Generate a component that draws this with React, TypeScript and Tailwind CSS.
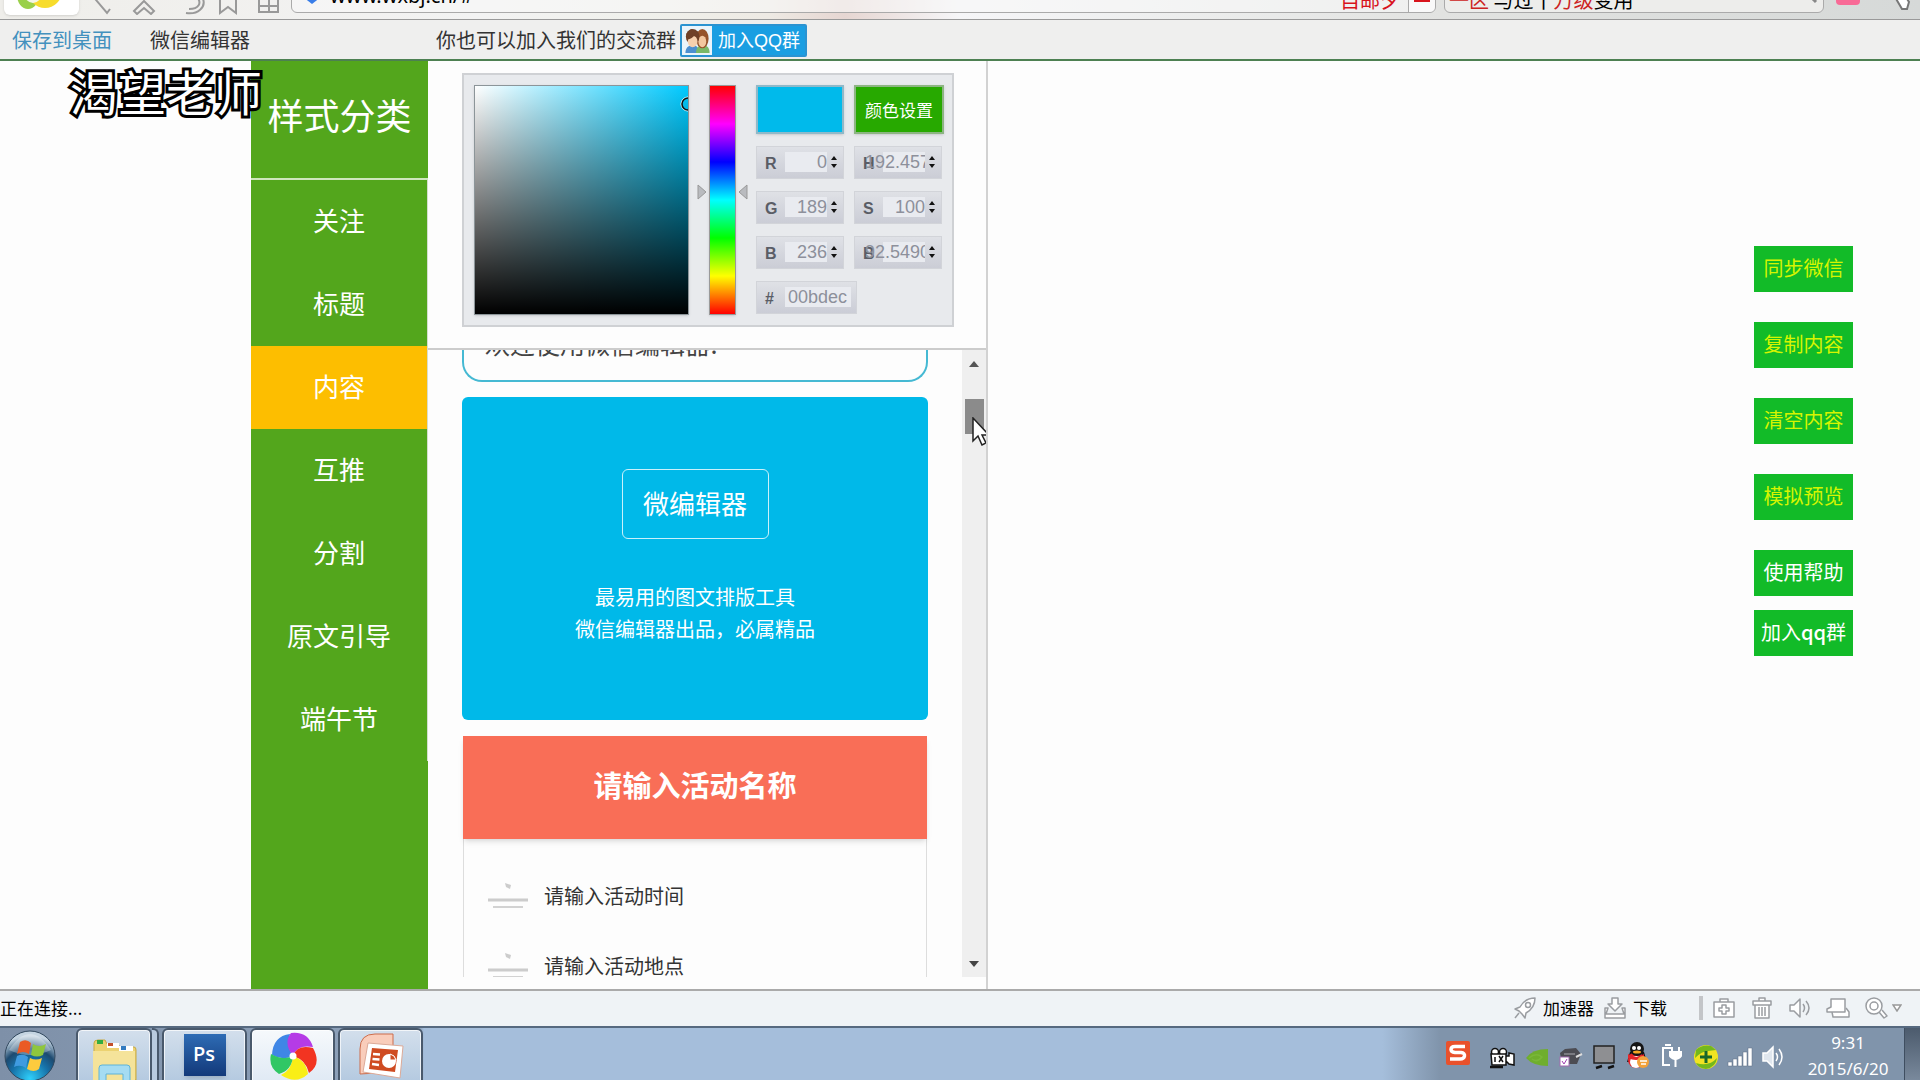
import { useState } from "react";
import type { ReactNode } from "react";
import clsx from "clsx";

const CATEGORIES = ["关注", "标题", "内容", "互推", "分割", "原文引导", "端午节"];

const ACTIONS = ["同步微信", "复制内容", "清空内容", "模拟预览"];

function BrowserChrome() {
  return (
    <header className="relative flex h-5 shrink-0 items-end overflow-hidden border-b border-[#999] bg-[linear-gradient(90deg,#efeeea_0%,#f3f3f3_25%,#f0f1ec_33%,#eeeae4_40%,#e6d6d2_44%,#f6f6f8_50%,#eeefef_60%,#e2e3e1_75%,#d6d9d8_100%)]">
      <div className="ml-1 mb-1 h-10 w-[75px] shrink-0 rounded-md bg-white shadow">
        <svg viewBox="0 0 75 40" className="h-10 w-[75px]">
          <ellipse cx="24" cy="20" rx="11" ry="14" fill="#9ad04a" />
          <ellipse cx="41" cy="16" rx="17" ry="17" fill="#f7dc2c" />
          <ellipse cx="29" cy="18" rx="9" ry="10" fill="#f4f6e6" />
        </svg>
      </div>
      <svg viewBox="0 0 200 40" className="mb-1 ml-3 h-10 w-[200px] shrink-0" fill="none" stroke="#999" strokeWidth="2">
        <path d="M8 20 L5 25 L16 38 L19 34" />
        <path d="M43 36 L53 26 L63 36 L60 39 L53 33 L46 39 Z" />
        <path d="M98 34 C108 34 111 28 106 22 M95 38 C107 40 115 32 112 24" />
        <path d="M129 20 V38 L137 32 L145 38 V20" />
        <path d="M168 20 V37 H187 V20 M178 20 V37 M168 31 H187" />
      </svg>
      <div className="mb-1.5 flex h-10 min-w-0 flex-1 items-end overflow-hidden rounded-b-md border border-[#aaa] bg-[#f8f8f8]/60">
        <svg viewBox="0 0 20 20" className="mb-2 ml-2.5 size-5 shrink-0">
          <path d="M1 6 L10 0 L19 6 L19 13 L10 20 L1 13 Z" fill="#397de8" />
        </svg>
        <input
          aria-label="地址"
          defaultValue="www.wxbj.cn/#"
          className="mb-0.5 ml-2 h-7 min-w-0 flex-1 bg-transparent font-['Noto_Sans'] text-xl leading-7 text-black outline-none"
        />
        <span className="flex h-9 items-end gap-1 pr-2 text-xl leading-6 text-[#d8141c]">
          <span>自邮夕</span>
        </span>
        <span className="h-full w-[27px] border-l border-[#aaa] bg-white/60">
          <span className="mx-auto mt-3.5 block h-3.5 w-4 bg-[#d8141c]" />
        </span>
      </div>
      <div className="mb-1.5 ml-2 flex h-10 w-[380px] shrink-0 items-end overflow-hidden rounded-b-md border border-[#aaa] bg-[#ededeb] px-1">
        <span className="flex-1 text-xl leading-6 text-black">
          <span className="text-[#c22]">一区</span>
          <span> 与过十</span>
          <span className="text-[#c22]">万级</span>
          <span>变用</span>
        </span>
        <svg viewBox="0 0 20 20" className="mb-2 size-5" fill="none" stroke="#888" strokeWidth="3">
          <circle cx="6" cy="7" r="5" />
          <path d="M10 11 L17 18" />
        </svg>
      </div>
      <span className="mb-3.5 ml-3 h-6 w-6 shrink-0 rounded bg-[#f86a96]" />
      <svg viewBox="0 0 28 28" className="mb-2 mr-1 ml-7 size-7 shrink-0">
        <path d="M7 14 L14 26 L19 26 L21 19 L14 8 Z" fill="#fff" stroke="#777" strokeWidth="2" />
      </svg>
    </header>
  );
}

function TopBar() {
  return (
    <div className="flex h-[41px] shrink-0 items-center border-b-2 border-[#4d8052] bg-[#efefee] text-xl text-[#333]">
      <a href="#save" className="ml-3 text-[#4391be]">
        保存到桌面
      </a>
      <a href="#home" className="ml-[38px]">
        微信编辑器
      </a>
      <span className="ml-[186px]">你也可以加入我们的交流群</span>
      <a
        href="#qq"
        className="ml-1 mt-0.5 flex h-[33px] w-[127px] items-center gap-1.5 overflow-hidden rounded-xs border-2 border-[#2b93d1] bg-[#1a9ee2] font-['Liberation_Sans','Noto_Sans_CJK_SC',sans-serif] text-lg whitespace-nowrap text-white"
      >
        <svg viewBox="0 0 30 30" className="h-full w-[30px] shrink-0 bg-[#eaf4fb]">
          <path d="M3 28 C3 21 8 20 11 20 C15 20 17 23 17 28 Z" fill="#4d8fd0" />
          <path d="M14 28 C14 21 18 20 21 20 C26 20 28 23 28 28 Z" fill="#7ab868" />
          <ellipse cx="20.5" cy="13" rx="6.5" ry="10" fill="#96532b" />
          <ellipse cx="20.5" cy="16" rx="4" ry="6" fill="#f3c7a0" />
          <ellipse cx="10.5" cy="11" rx="7" ry="8" fill="#704028" />
          <ellipse cx="10.5" cy="16" rx="5" ry="6" fill="#f7d0ae" />
          <path d="M5 14 Q10 13 13 9 L17 14 L16 6 L9 3 L4 8 Z" fill="#704028" />
        </svg>
        加入QQ群
      </a>
    </div>
  );
}

function Sidebar({ active, onSelect }: { active: string; onSelect: (name: string) => void }) {
  return (
    <nav className="flex w-[177px] shrink-0 flex-col bg-[#53a61c] text-white">
      <h1 className="flex h-[119px] shrink-0 items-center justify-center border-b-2 border-[#cfe6bd] pb-3 text-4xl">
        样式分类
      </h1>
      {CATEGORIES.map((name) => (
        <button
          key={name}
          onClick={() => onSelect(name)}
          className={clsx(
            "h-[83px] shrink-0 border-r border-[#d5ddcf] pb-1 text-[26px]",
            name === active && "bg-[#fdbe00]",
          )}
        >
          {name}
        </button>
      ))}
    </nav>
  );
}

function Spinner() {
  return (
    <svg viewBox="0 0 6 12" className="h-3 w-1.5 shrink-0" fill="#111">
      <path d="M0 4 L3 0 L6 4 Z" />
      <path d="M0 8 L3 12 L6 8 Z" />
    </svg>
  );
}

function Field({ label, value, wide }: { label: string; value: string; wide?: boolean }) {
  return (
    <label
      className={clsx(
        "flex h-[33px] items-start border border-[#d2d4d9] bg-linear-to-b from-[#dfe1e6] to-[#cbcdd6] pt-px font-['Liberation_Sans',sans-serif]",
        wide ? "w-[101px]" : "w-[88px]",
      )}
    >
      <span className="ml-2 w-0 pt-1 text-base leading-6 font-bold text-[#5a5d66]">{label}</span>
      <input
        defaultValue={value}
        className={clsx(
          "mt-1 h-5 bg-[linear-gradient(90deg,transparent_20px,#e9ebf0_20px)] text-lg leading-5 text-[#8d909b] outline-none",
          wide ? "w-[86px] pr-1 text-right" : "mr-1 w-[62px]",
          !wide && value.length < 5 ? "text-right" : "pl-0.5",
        )}
      />
      {!wide && (
        <span className="pt-2">
          <Spinner />
        </span>
      )}
    </label>
  );
}

function ColorPicker() {
  return (
    <div className="mr-[33px] ml-[34px] mt-3 flex h-[254px] w-[492px] shrink-0 border-2 border-[#cfd1d4] bg-[#e8eaed] pt-2.5 pl-2.5">
      <div className="relative h-[230px] w-[215px] overflow-hidden border border-[#8c9599] bg-[linear-gradient(to_top,#000,transparent),linear-gradient(to_right,#fff,#00caff)] shadow-sm">
        <svg viewBox="0 0 16 16" className="absolute -right-2 top-2.5 size-4" fill="none">
          <circle cx="8" cy="8" r="7" stroke="#fff" />
          <circle cx="8" cy="8" r="6" stroke="#111" strokeWidth="1.5" />
        </svg>
      </div>
      <svg viewBox="0 0 10 16" className="mt-[99px] ml-2 h-4 w-2.5" fill="#b9bbbf" stroke="#999">
        <path d="M1 1 L9 8 L1 15 Z" />
      </svg>
      <div className="ml-0.5 h-[230px] w-[27px] border border-[#999] bg-[linear-gradient(to_bottom,#f00,#f0f,#00f,#0ff,#0f0,#ff0,#f00)] shadow-sm" />
      <svg viewBox="0 0 10 16" className="mt-[99px] ml-0.5 h-4 w-2.5" fill="#b9bbbf" stroke="#999">
        <path d="M9 1 L1 8 L9 15 Z" />
      </svg>
      <div className="ml-2 grid h-fit grid-cols-[88px_90px] gap-x-[10px] gap-y-3">
        <div className="h-[49px] border-2 border-[#8fb9c9] bg-[#00baeb] shadow-sm" />
        <button className="h-[49px] border-2 border-[#8db583] bg-[#27a900] text-[17px] text-white shadow-sm">
          颜色设置
        </button>
        <Field label="R" value="0" />
        <Field label="H" value="192.45762" />
        <Field label="G" value="189" />
        <Field label="S" value="100" />
        <Field label="B" value="236" />
        <Field label="B" value="92.549019" />
        <Field label="#" value="00bdec" wide />
      </div>
    </div>
  );
}

function EventRow({ text }: { text: string }) {
  return (
    <li className="flex h-[70px] items-center pb-0.5 text-xl text-[#333]">
      <svg viewBox="0 0 40 30" className="mr-4 ml-6 h-[30px] w-10">
        <path d="M17 2 L23 4 L22 8 L18 6 Z" fill="#ccc" />
        <path d="M0 19 H40" stroke="#ccc" strokeWidth="3" />
        <path d="M5 26 H35" stroke="#d2d2d2" strokeWidth="2" />
      </svg>
      {text}
    </li>
  );
}

function Scrollbar() {
  return (
    <div className="relative flex w-6 shrink-0 flex-col items-center bg-[#efefef]">
      <svg viewBox="0 0 10 6" className="mt-[11px] h-1.5 w-2.5" fill="#555">
        <path d="M0 6 L5 0 L10 6 Z" />
      </svg>
      <div className="mt-8 h-[35px] w-[19px] bg-[#8b8b8b]" />
      <svg viewBox="0 0 10 6" className="mt-auto mb-2.5 h-1.5 w-2.5" fill="#444">
        <path d="M0 0 L5 6 L10 0 Z" />
      </svg>
      <svg viewBox="0 0 18 29" className="absolute top-[67px] left-2.5 h-[29px] w-[18px]" fill="#fff" stroke="#222" strokeWidth="1.5">
        <path d="M1 1 V24 L6 19 L10 28 L14 26 L10 18 H17 Z" />
      </svg>
    </div>
  );
}

function StylePanel() {
  return (
    <section className="flex w-[560px] shrink-0 flex-col border-r-2 border-[#d2d2d2] pb-3">
      <ColorPicker />
      <div className="mt-[21px] flex min-h-0 flex-1 overflow-hidden border-t-2 border-[#ccc]">
        <div className="-mt-[30px] flex-1 pr-[34px] pl-[34px]">
          <div className="h-[62px] rounded-b-[20px] border-2 border-t-0 border-[#45b9d3] pl-[21px] text-[25px] leading-[46px] text-[#444]">
            欢迎使用微信编辑器!
          </div>
          <article className="mt-[15px] flex h-[323px] flex-col items-center rounded-md bg-[#00b9e9] text-white">
            <h2 className="mt-[72px] flex h-[70px] w-[147px] items-center justify-center rounded-md border border-[#c9f1fb] pb-1 text-[26px]">
              微编辑器
            </h2>
            <p className="mt-[42px] text-center text-xl leading-8">
              最易用的图文排版工具
              <br />
              微信编辑器出品，必属精品
            </p>
          </article>
          <article className="mx-px mt-4 h-[360px] border-x border-[#ddd]">
            <h2 className="-mx-px mb-[23px] flex h-[103px] items-center justify-center bg-[#f96e57] pb-1.5 text-[29px] font-bold text-white shadow-md">
              请输入活动名称
            </h2>
            <ul>
              <EventRow text="请输入活动时间" />
              <EventRow text="请输入活动地点" />
            </ul>
          </article>
        </div>
        <Scrollbar />
      </div>
    </section>
  );
}

function ActionRail() {
  return (
    <aside className="mt-[185px] mr-[67px] ml-auto flex w-[99px] flex-col text-xl text-white">
      {ACTIONS.map((name) => (
        <button key={name} className="mb-[30px] h-[46px] bg-[#12bb28] pb-0.5 text-[#d6f500]">
          {name}
        </button>
      ))}
      <button className="mb-3.5 h-[46px] bg-[#12bb28] pb-0.5">使用帮助</button>
      <button className="h-[46px] bg-[#12bb28] pb-0.5">
        加入<span className="font-medium">qq</span>群
      </button>
    </aside>
  );
}

function StatusIcon({ children, className }: { children: ReactNode; className?: string }) {
  return (
    <svg
      viewBox="0 0 24 24"
      className={clsx("size-6 shrink-0", className)}
      fill="#fff"
      stroke="#9a9da1"
      strokeWidth="1.5"
      strokeLinejoin="round"
    >
      {children}
    </svg>
  );
}

function StatusBar() {
  return (
    <div className="flex h-[37px] shrink-0 items-center border-t-2 border-[#aaa] bg-[#eff3f6] pb-0.5 text-[17px] text-black">
      <span>正在连接...</span>
      <StatusIcon className="ml-auto">
        <path d="M7 11 C11 4 17 2 22 2 C22 7 20 13 13 17 L12 22 L9 18 L6 15 L2 13 Z" />
        <circle cx="15" cy="9" r="2.5" />
        <path d="M6 17 L2 22" />
      </StatusIcon>
      <span className="ml-1.5 w-[60px]">加速器</span>
      <StatusIcon>
        <path d="M5 12 H2 V22 H22 V12 H19 L21 18 H3 Z" />
        <path d="M9 2 H15 V8 H19 L12 15 L5 8 H9 Z" />
      </StatusIcon>
      <span className="ml-1.5 w-[66px]">下载</span>
      <span className="h-6 w-1 bg-[#c3c5c8]" />
      <StatusIcon className="ml-[9px]">
        <path d="M8 6 V3 H16 V6 M2 6 H22 V21 H2 Z M10 9 H14 V12 H17 V15 H14 V18 H10 V15 H7 V12 H10 Z" />
      </StatusIcon>
      <StatusIcon className="ml-[14px]">
        <path d="M5 9 V22 H19 V9 M3 5 H21 V9 H3 Z M9 5 V2 H15 V5 M9 11 V20 M12 11 V20 M15 11 V20" />
      </StatusIcon>
      <StatusIcon className="ml-[14px]">
        <path d="M2 9 H6 L12 3 V21 L6 15 H2 Z" />
        <path d="M15 8 Q18 12 15 16 M18 5 Q24 12 18 19" fill="none" />
      </StatusIcon>
      <StatusIcon className="ml-[14px]">
        <path d="M6 16 L7 21 H23 V16 L20 12" />
        <path d="M5 3 H19 V16 H1 V13 L5 11 Z" />
      </StatusIcon>
      <StatusIcon className="ml-[14px]">
        <path d="M15 16 L20 22 L23 20 L18 14" />
        <circle cx="10" cy="10" r="8" />
        <circle cx="10" cy="10" r="4" />
      </StatusIcon>
      <svg viewBox="0 0 10 8" className="mr-[18px] ml-1 h-2 w-2.5" fill="#fff" stroke="#999" strokeWidth="1.5">
        <path d="M1 1 H9 L5 7 Z" />
      </svg>
    </div>
  );
}

type TaskButtonProps = { label: string; lit?: boolean; stacked?: boolean; children: ReactNode };

function TaskButton({ label, lit, stacked, children }: TaskButtonProps) {
  return (
    <button
      aria-label={label}
      className={clsx(
        "flex h-16 shrink-0 justify-center rounded-md border-2 border-[#49596c] pt-0.5 inset-ring inset-ring-white/70",
        stacked ? "w-[76px]" : "w-[85px]",
        lit ? "bg-linear-to-b from-[#f6f9fc] to-[#dce7f3]" : "bg-linear-to-b from-[#d3dfec] to-[#afc6de]",
      )}
    >
      {children}
    </button>
  );
}

function Tray() {
  return (
    <svg viewBox="0 0 340 30" className="mt-3 h-[30px] w-[340px] shrink-0">
      <g>
        <rect x="0" y="1" width="24" height="24" rx="2" fill="#e9512c" />
        <path d="M19 6.500 H9 Q5 6.500 5 9.500 Q5 12 9 12.500 H15 Q19 13 18.500 16 Q18 19 14 19 H4" fill="none" stroke="#fff" strokeWidth="3.500" />
      </g>
      <g stroke="#111" strokeWidth="1.500" fill="#fff">
        <circle cx="49" cy="12" r="3.500" />
        <circle cx="57" cy="12" r="3.500" />
        <path d="M45 14 H60 V25 H46 Z M60 16 H63 V13 L68 14 V25 L63 24 L60 21 Z" />
        <path d="M49 17 V22 M53 16 L57 22 M57 16 L53 22" />
        <path d="M44 27 H57" strokeWidth="2.500" />
      </g>
      <path d="M80 18 Q86 9 102 9 V26 Q87 26 80 18 Z" fill="#6fae2d" />
      <path d="M83 18 Q90 12 96 17 Q91 23 86 19" fill="none" stroke="#7ab738" strokeWidth="1.500" />
      <g>
        <path d="M114 13 L119 9 L130 8 L135 14 L131 24 L116 24 Z" fill="#4c4c52" />
        <path d="M118 14 H129" stroke="#8b8b92" strokeWidth="1.500" />
        <path d="M130 17 L136 14" stroke="#ddd" strokeWidth="2" />
        <rect x="114" y="17" width="9" height="9" fill="#fff" stroke="#a36bb0" />
        <path d="M116 21 L118 24 L121 19" fill="none" stroke="#a03cb0" />
      </g>
      <g>
        <rect x="148" y="6" width="20" height="17" fill="#8e8f92" stroke="#222" strokeWidth="1.500" />
        <path d="M150 28 L156 26 M162 28 L168 26" stroke="#111" strokeWidth="2.500" />
      </g>
      <g>
        <path d="M181 22 L184 12 H198 L201 22 Z" fill="#151515" />
        <ellipse cx="190" cy="20" rx="8" ry="8" fill="#e6252a" />
        <ellipse cx="190" cy="22" rx="6" ry="6" fill="#fff" />
        <ellipse cx="191" cy="9" rx="7" ry="7" fill="#151515" />
        <circle cx="188" cy="8" r="2" fill="#fff" />
        <circle cx="193" cy="8" r="2" fill="#fff" />
        <ellipse cx="191" cy="12" rx="4" ry="1.500" fill="#f5a623" />
        <path d="M182 14 Q191 20 198 14 V18 Q190 22 182 18 Z" fill="#e6252a" />
        <circle cx="197" cy="22" r="6" fill="#f3a23a" />
        <path d="M194 21 H201 M195 24 H200" stroke="#fff" strokeWidth="1.500" />
      </g>
      <g fill="none" stroke="#fff" strokeWidth="2">
        <path d="M226 8 H217 V25 H224 M219 5 H225" />
        <path d="M226 7 V12 M233 7 V12 M229.500 19 V27" />
        <path d="M224 12 H235 V16 Q233 19 229 19 Q225 18 224 16 Z" fill="#fff" />
      </g>
      <g>
        <circle cx="260" cy="17" r="12" fill="#f1e322" />
        <path d="M250 10 Q256 4 265 6 L270 10 L262 11 Q256 11 249 18 Z" fill="#74b81c" />
        <path d="M271 18 Q270 27 260 29 Q252 28 250 23 Q263 27 271 18 Z" fill="#74b81c" />
        <path d="M260 11 V23 M254 17 H266" stroke="#17672a" strokeWidth="3" />
      </g>
      <g fill="#fff" stroke="#5b6c82" strokeWidth="0.500">
        <rect x="282" y="22" width="4" height="4" />
        <rect x="287" y="19" width="4" height="7" />
        <rect x="292" y="16" width="4" height="10" />
        <rect x="297" y="12" width="4" height="14" />
        <rect x="302" y="8" width="4" height="18" />
      </g>
      <g fill="none" stroke="#fff" strokeWidth="1.500">
        <path d="M317 13 H321 L327 7 V27 L321 21 H317 Z" fill="#dfe6ee" />
        <path d="M330 13 Q333 17 330 21 M333 9 Q339 17 333 25" />
      </g>
    </svg>
  );
}

function Taskbar() {
  return (
    <footer className="flex h-[54px] shrink-0 items-start overflow-hidden border-t-2 border-[#56697f] bg-[linear-gradient(90deg,#7e90a8_0,#8fa3bc_420px,#a5bedb_424px,#a5bedb_72%,#8094ab_75%,#8094ab_100%)]">
      <button aria-label="开始" className="mt-0.5 ml-1 size-[52px] shrink-0">
        <svg viewBox="0 0 52 52" className="size-[52px]">
          <defs>
            <radialGradient id="orb" cx="50%" cy="95%" r="85%">
              <stop offset="0" stopColor="#2fd0fb" />
              <stop offset="0.45" stopColor="#1671a8" />
              <stop offset="0.7" stopColor="#1d4a70" />
              <stop offset="1" stopColor="#c5d5e2" />
            </radialGradient>
          </defs>
          <circle cx="26" cy="26" r="25" fill="url(#orb)" stroke="#31485e" />
          <path d="M5 20 Q26 -12 47 20 Q26 30 5 20 Z" fill="#fff" opacity="0.3" />
          <path d="M16 12 Q22 8 27 13 L25 24 Q19 20 13 24 Z" fill="#ea5a25" />
          <path d="M29 14 Q35 18 42 14 L39 25 Q33 28 27 25 Z" fill="#8fc63d" />
          <path d="M13 26 Q19 23 24 27 L22 38 Q16 34 10 37 Z" fill="#3f9be0" />
          <path d="M26 28 Q32 31 38 28 L35 39 Q30 43 23 39 Z" fill="#fccb3e" />
        </svg>
      </button>
      <div className="ml-5 flex shrink-0 gap-[3px]">
        <div className="flex">
          <TaskButton label="资源管理器" stacked>
            <svg viewBox="0 0 48 48" className="mt-1.5 size-12">
              <path d="M4 5 Q4 2 8 2 H15 L17 6 H28 L30 9 H44 Q46 9 46 12 V42 H4 Z" fill="#ecd271" stroke="#c6a945" />
              <rect x="7" y="2" width="6" height="4" fill="#32ad42" />
              <rect x="17" y="5" width="12" height="5" fill="#fff" />
              <rect x="18" y="5" width="5" height="3" fill="#c2502c" />
              <rect x="29" y="8" width="14" height="5" fill="#fff" />
              <rect x="31" y="8" width="5" height="4" fill="#347bc0" />
              <path d="M3 13 H45 V44 H3 Z" fill="#f5e39a" />
              <path d="M9 48 V30 Q9 27 12 27 H37 Q40 27 40 30 V48 H33 V36 H16 V48 Z" fill="#a5dcf2" stroke="#5eb3d8" />
            </svg>
          </TaskButton>
          <span className="h-16 w-[7px] rounded-tr-md border-t-2 border-r-2 border-[#49596c] bg-[#b9cbdf]" />
        </div>
        <TaskButton label="Photoshop">
          <svg viewBox="0 0 42 42" className="mt-0.5 size-[42px] bg-linear-to-b from-[#2e6cb5] to-[#13397a] shadow-md">
            <text x="20" y="27" textAnchor="middle" fontFamily="Open Sans, sans-serif" fontWeight="600" fontSize="20" fill="#fff">
              Ps
            </text>
          </svg>
        </TaskButton>
        <TaskButton label="浏览器" lit>
          <svg viewBox="0 0 48 48" className="size-12">
            <path d="M24 24 Q13 29 3 23 Q4 4 21 2 Q17 14 24 24" fill="#3f86e6" />
            <path d="M24 24 Q14 11 22 1 Q39 -1 44 15 Q28 12 24 24" fill="#b53be6" />
            <path d="M24 24 Q28 12 44 16 Q53 32 40 41 Q37 28 24 24" fill="#f23421" />
            <path d="M24 24 Q37 28 39 42 Q27 53 12 43 Q23 38 24 24" fill="#f9ee17" />
            <path d="M24 24 Q23 38 10 42 Q-1 35 2 22 Q14 29 24 24" fill="#30c765" />
            <circle cx="24" cy="24" r="3.500" fill="#fff" />
          </svg>
        </TaskButton>
        <TaskButton label="PowerPoint">
          <svg viewBox="0 0 48 48" className="size-12">
            <path d="M3 42 V17 Q3 2 18 2 H36 V40 Z" fill="#f9cdbb" stroke="#cc6d4c" />
            <path d="M11 11 L46 14 L43 46 L6 40 Z" fill="#fff" stroke="#dcaa98" />
            <path d="M15 16 L41 18 L38 40 L12 37 Z" fill="#cf4b21" />
            <path d="M16 22 L23 22.500 M15.500 27 L22.500 27.500 M15 32 L22 33" stroke="#fff" strokeWidth="2.500" />
            <circle cx="32" cy="29" r="7" fill="#fff" />
            <path d="M33 28 V22 Q38 23 39 28 Z" fill="#cf4b21" stroke="#fff" />
          </svg>
        </TaskButton>
      </div>
      <div className="ml-auto flex">
        <Tray />
        <time className="mt-0.5 ml-3 block w-[100px] text-center font-['Noto_Sans',sans-serif] text-[17px] leading-[26px] text-white">
          9:31
          <br />
          2015/6/20
        </time>
        <button aria-label="显示桌面" className="ml-1.5 h-[54px] w-4 border-l border-[#3f4e60] bg-linear-to-b from-[#4c5b6d] to-[#7b8b9e]" />
      </div>
    </footer>
  );
}

export default function App() {
  const [category, setCategory] = useState("内容");

  return (
    <div className="relative flex h-screen flex-col overflow-hidden bg-[#fdfdfd] font-['Noto_Sans_CJK_SC',sans-serif]">
      <BrowserChrome />
      <TopBar />
      <main className="flex min-h-0 flex-1 items-stretch overflow-hidden pl-[251px]">
        <Sidebar active={category} onSelect={setCategory} />
        <StylePanel />
        <ActionRail />
      </main>
      <StatusBar />
      <Taskbar />
      <div className="pointer-events-none absolute top-[62px] left-[70px] text-5xl leading-14 text-white [paint-order:stroke_fill] [-webkit-text-stroke:6px_#000]">
        渴望老师
      </div>
    </div>
  );
}
